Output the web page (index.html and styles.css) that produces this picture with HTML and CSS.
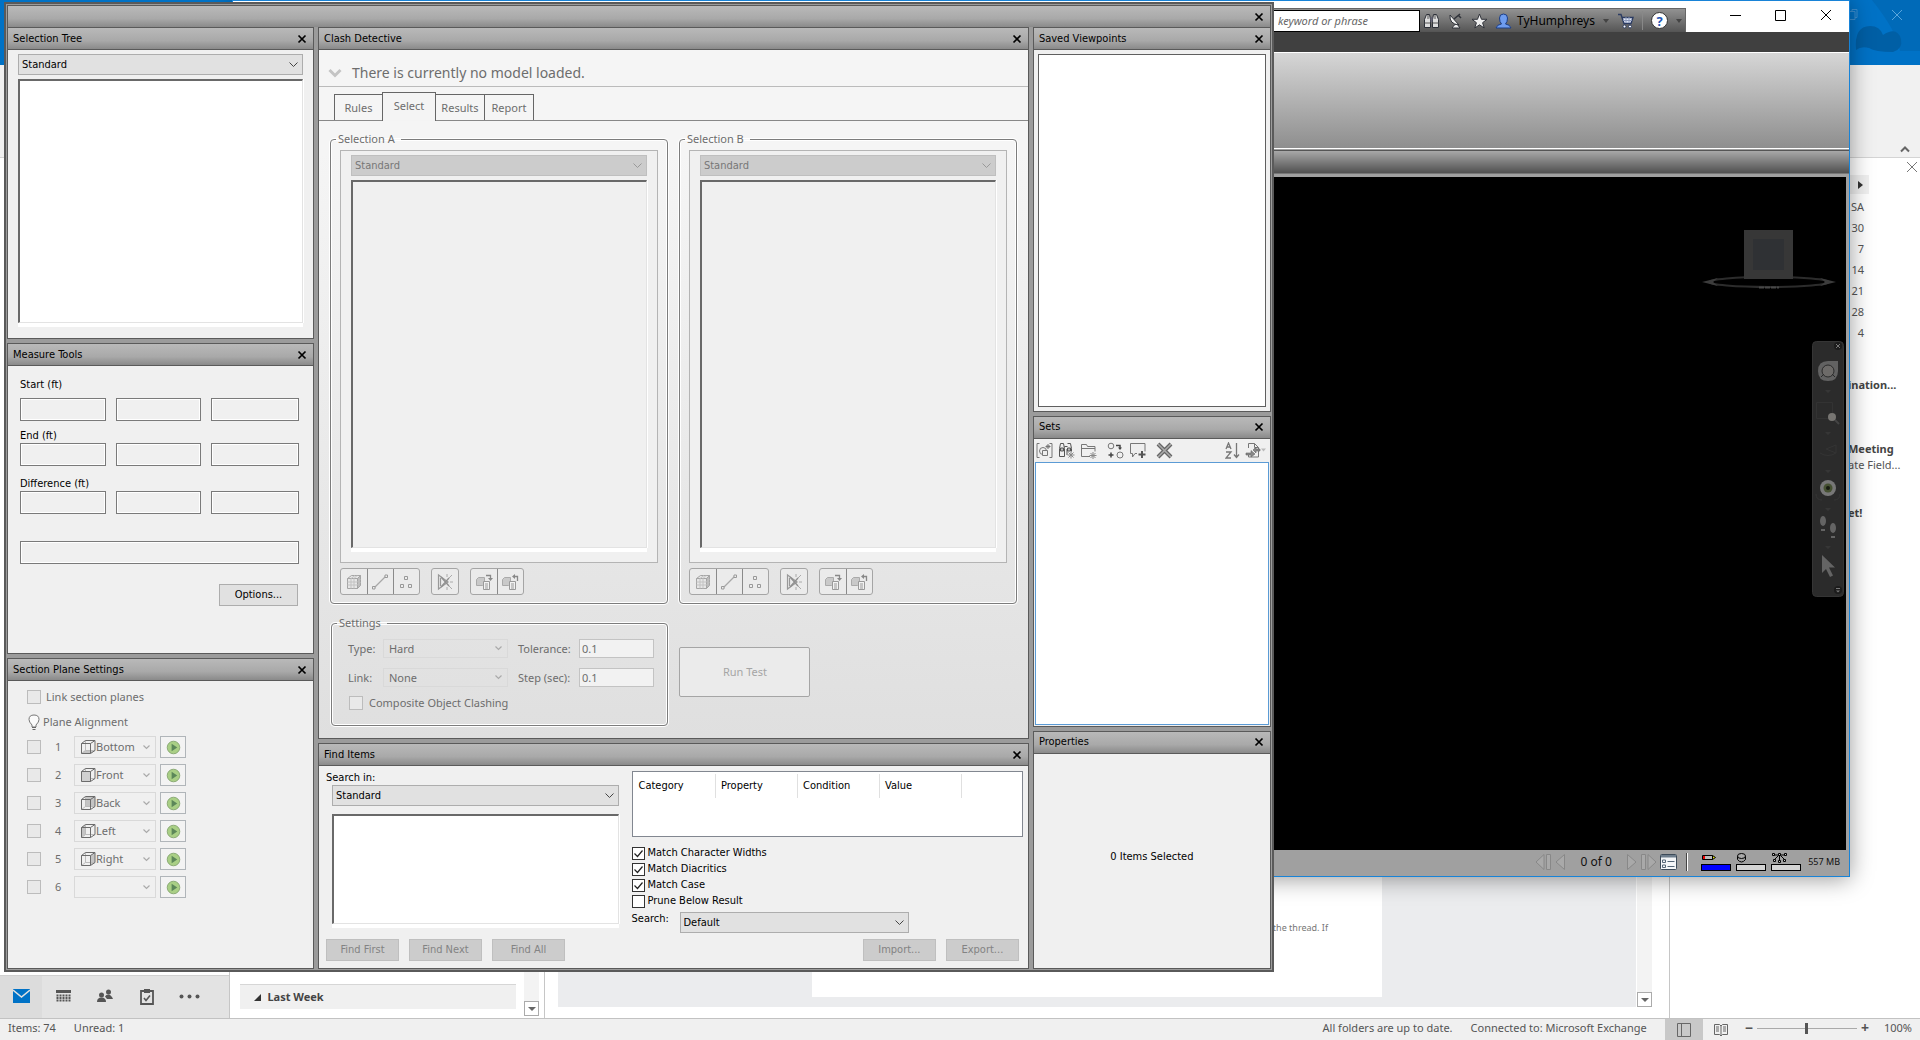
FILE: index.html
```html
<!DOCTYPE html>
<html lang="en">
<head>
  <meta charset="UTF-8" />
  <meta name="viewport" content="width=device-width, initial-scale=1.0"/>
  <title>Navisworks</title>
  <link rel="stylesheet" href="styles.css">
</head>
<body>

  <!-- shared icons -->
  <svg class="sprite" aria-hidden="true">
    <symbol id="i-x" viewBox="0 0 10 10"><path d="M1.5 1.5 8.5 8.5M8.5 1.5 1.5 8.5" stroke="currentColor" stroke-width="1.7" fill="none"/></symbol>
    <symbol id="i-thinx" viewBox="0 0 12 12"><path d="M1 1 11 11M11 1 1 11" stroke="currentColor" stroke-width="1" fill="none"/></symbol>
    <symbol id="i-cube" viewBox="0 0 18 18"><path d="M2.5 5.5h10v10h-10zM2.5 5.5l4-3h9l-3 3" fill="#e6e6e6" stroke="#a5a5a5"/><path d="M12.5 5.5l3-3v10l-3 3z" fill="#bbb" stroke="#a5a5a5"/><path d="M6 5.5v10M9 5.5v10M2.5 9h10l3-3M2.5 12h10l3-3M6 5.5l4-3M9 5.5l3-3" stroke="#c2c2c2" fill="none"/></symbol>
    <symbol id="i-line" viewBox="0 0 18 18"><path d="M3.5 14.5 14.5 3.5" stroke="#a8a8a8" stroke-width="1.3"/><path d="M1.5 13.5h2.500v2.500h-2.500zM14 2h2.500v2.500h-2.500z" fill="#eee" stroke="#999"/></symbol>
    <symbol id="i-points" viewBox="0 0 18 18"><path d="M7.5 3.5h3v3h-3zM3.5 11.5h3v3h-3zM11.5 11.5h3v3h-3z" fill="#eee" stroke="#999"/></symbol>
    <symbol id="i-clash" viewBox="0 0 18 18"><path d="M2.5 2v14L12 9zM4.5 5v8" fill="none" stroke="#999" stroke-width="1.2"/><path d="M5 4l8 9M5 14l8-9" stroke="#8f8f8f" stroke-width="1.3"/><path d="M11 4V1M13 5l3-3M14 9h3M13 13l3 3M11 14v3" stroke="#aaa"/></symbol>
    <symbol id="i-sendin" viewBox="0 0 18 18"><path d="M1.5 6.5l2-2h6v7l-2 1h-6z" fill="#c9c9c9" stroke="#aaa"/><path d="M8.5 8.5h6v8h-6z" fill="#f2f2f2" stroke="#999"/><path d="M10 11h3M10 13h3M10 15h3" stroke="#999"/><path d="M11 2.5h4.500V6" fill="none" stroke="#888" stroke-width="1.3"/><path d="M13 5h5l-2.500 3z" fill="#888"/></symbol>
    <symbol id="i-sendout" viewBox="0 0 18 18"><path d="M1.5 6.5l2-2h6v7l-2 1h-6z" fill="#c9c9c9" stroke="#aaa"/><path d="M8.5 8.5h6v8h-6z" fill="#f2f2f2" stroke="#999"/><path d="M10 11h3M10 13h3M10 15h3" stroke="#999"/><path d="M13 3.5h3.500V8" fill="none" stroke="#888" stroke-width="1.3"/><path d="M14 1v5l-3-2.500z" fill="#888"/></symbol>
    <symbol id="i-play" viewBox="0 0 16 16"><circle cx="8" cy="8" r="6.7" fill="#a9cf85" stroke="#88a872"/><path d="M6 4l6 4-6 4z" fill="#5c8759"/></symbol>
    <symbol id="i-box" viewBox="0 0 16 16"><path d="M5.5 1.5v10H15M5.5 11.5l-4 3" fill="none" stroke="#bbb"/><path d="M1.5 4.5h9v10h-9zM1.5 4.5l4-3H15l-4.500 3M15 1.5v10l-4.500 3" fill="none" stroke="#6c6c6c"/></symbol>
  </svg>

  <div class="outlook">
    <header class="ol-title">
      <svg class="ol-art" viewBox="0 0 70 65"><path d="M22 0h48v51H50q-2-18-28-51z" fill="#006ab8"/><path d="M6 50q-2-24 14-24 10 0 13 9 14-9 18 4 2 10-8 13-18 0-24-4-8-2-13 2z" fill="#005fa5"/><path d="M0 11.5h5v8H0M2 11V9.5h5v8H5" fill="none" stroke="#3c8fd0"/><path d="M42 10l10 10M52 10 42 20" stroke="#5aa5dc"/></svg>
    </header>
    <div class="ol-ribbon">
      <button class="plain" aria-label="Collapse the Ribbon"><svg width="10" height="8" viewBox="0 0 10 8"><path d="M1 6.5 5 2.5 9 6.5" fill="none" stroke="#666" stroke-width="2"/></svg></button>
    </div>
    <div class="ol-main">
      <div class="ol-folders">
        <nav class="ol-nav">
          <button class="ol-navbtn current" aria-label="Mail"><svg width="17" height="14" viewBox="0 0 17 14"><path d="M0 0h17v14H0z" fill="#0072c6"/><path d="M0 1l8.500 7L17 1" fill="none" stroke="#e1e1e1" stroke-width="1.5"/></svg></button>
          <button class="ol-navbtn" aria-label="Calendar"><svg width="15" height="14" viewBox="0 0 15 14"><path d="M0 1h15v3H0z" fill="#555"/><path d="M.5 6.5h14M.5 9h14M.5 11.5h14" stroke="#555" stroke-width="1.8" stroke-dasharray="2 1"/></svg></button>
          <button class="ol-navbtn" aria-label="People"><svg width="16" height="14" viewBox="0 0 16 14" fill="#555"><circle cx="4.5" cy="6" r="2.5"/><path d="M0 13q0-4.500 4.500-4.500T9 13z"/><circle cx="11.5" cy="3" r="2.5"/><path d="M8 7.5q1-2 3.500-2T16 10h-6z"/></svg></button>
          <button class="ol-navbtn" aria-label="Tasks"><svg width="14" height="17" viewBox="0 0 14 17"><path d="M1 3h12v13H1z" fill="none" stroke="#555" stroke-width="1.8"/><path d="M4 1h6v4H4z" fill="#555"/><path d="M4 10l2 2.500 4-5" fill="none" stroke="#555" stroke-width="1.6"/></svg></button>
          <button class="ol-navbtn" aria-label="More"><svg width="21" height="5" viewBox="0 0 21 5" fill="#555"><circle cx="2.5" cy="2.5" r="2"/><circle cx="10.5" cy="2.5" r="2"/><circle cx="18.5" cy="2.5" r="2"/></svg></button>
        </nav>
      </div>
      <div class="ol-list">
        <div class="ol-group"><svg width="7" height="7" viewBox="0 0 7 7"><path d="M7 0v7H0z" fill="#333"/></svg>Last Week</div>
        <div class="scroll"><button class="scroll-btn" aria-label="Scroll down"><svg width="8" height="4" viewBox="0 0 8 4"><path d="M0 0h8L4 4z" fill="#666"/></svg></button></div>
      </div>
      <div class="ol-reading">
        <div class="ol-page"><div class="ol-mail">the thread. If</div></div>
        <div class="scroll"><button class="scroll-btn" aria-label="Scroll down"><svg width="8" height="4" viewBox="0 0 8 4"><path d="M0 0h8L4 4z" fill="#666"/></svg></button></div>
      </div>
      <aside class="ol-todo">
        <button class="plain todo-close" aria-label="Close pane"><svg width="12" height="12"><use href="#i-thinx"/></svg></button>
        <button class="todo-next" aria-label="Next month"><svg width="5" height="8" viewBox="0 0 5 8"><path d="M0 0l5 4-5 4z" fill="#333"/></svg></button>
        <ul class="cal">
          <li>SA</li><li>30</li><li>7</li><li>14</li><li>21</li><li>28</li><li>4</li>
        </ul>
        <ul class="tasks">
          <li><b>ination...</b></li>
          <li><b>Meeting</b><br>ate Field...</li>
          <li><b>et!</b></li>
        </ul>
      </aside>
    </div>
    <footer class="ol-status">
      <span>Items: 74</span>
      <span>Unread: 1</span>
      <span class="push">All folders are up to date.</span>
      <span>Connected to: Microsoft Exchange</span>
      <button class="view on" aria-label="Normal view"><svg width="14" height="14" viewBox="0 0 14 14"><path d="M.5 .5h13v13H.5zM4.5 .5v13" fill="none" stroke="#666"/></svg></button>
      <button class="view" aria-label="Reading view"><svg width="14" height="14" viewBox="0 0 14 14"><path d="M.5 1.5h5L7 3l1.500-1.500h5v10h-5L7 13l-1.500-1.500h-5zM7 3v10" fill="none" stroke="#666"/><path d="M2 4h3M2 6h3M2 8h3M9 4h3M9 6h3M9 8h3" stroke="#666"/></svg></button>
      <label class="zoom"><b>−</b><input type="range" min="0" max="200" value="100" aria-label="Zoom"><b>+</b></label>
      <span>100%</span>
    </footer>
  </div>

  <div class="navis">
    <div class="nv-top">
      <div class="infocenter">
        <input type="text" class="nv-search" placeholder="keyword or phrase" aria-label="Search">
        <button class="plain" aria-label="Find"><svg width="17" height="16" viewBox="0 0 17 16"><path d="M3.5 1.5h3l1 5v8h-6v-8zM10.5 1.5h3l2 5v8h-6v-8z" fill="#ddd" stroke="#2d3038"/><path d="M7.5 4h2v5h-2z" fill="#667"/><path d="M1.5 10h6M9.5 10h6M5 2v4M12 2v4" stroke="#555"/></svg></button>
        <button class="plain" aria-label="Subscription"><svg width="17" height="16" viewBox="0 0 15 16"><path d="M4 15q2-4 5-4l3 4z" fill="#eee" stroke="#30333a"/><path d="M2 2q-1 9 9 10L2 2z" fill="#eee" stroke="#30333a"/><path d="M6 6l6-5M13 5l-3-3" fill="none" stroke="#30333a" stroke-width="1.5"/></svg></button>
        <button class="plain" aria-label="Favorites"><svg width="17" height="16" viewBox="0 0 17 16"><path d="M8.500 1l2 5.300h5.500l-4.400 3.400 1.600 5.300-4.700-3.200L3.800 15l1.600-5.300L1 6.300h5.500z" fill="#eee" stroke="#30333a"/></svg></button>
        <button class="plain user"><svg width="17" height="16" viewBox="0 0 17 16"><path d="M1 15q1-3.500 5.500-4Q4.500 9 4.500 5q0-4 4-4t4 4q0 4-2 6 4.500.5 5.500 4z" fill="#6f9df0" stroke="#1d3e86"/></svg>TyHumphreys</button>
        <i class="caret"></i>
        <button class="plain" aria-label="Exchange Apps"><svg width="17" height="16" viewBox="0 0 17 16"><path d="M5 4.500h11l-2 6H7z" fill="#dde4f5"/><path d="M1 1.500h3l3 9h7l2-6H5.500" fill="none" stroke="#2c3c63" stroke-width="1.4"/><path d="M6 7.500h9M9 4v6M12 4v6" stroke="#8a97b8"/><circle cx="7.5" cy="13.500" r="1.500" fill="#fff" stroke="#2c3c63"/><circle cx="13" cy="13.500" r="1.500" fill="#fff" stroke="#2c3c63"/></svg></button>
        <i class="sep"></i>
        <button class="help" aria-label="Help">?</button>
        <i class="caret"></i>
      </div>
      <div class="win-btns">
        <button class="plain" aria-label="Minimize"><svg width="11" height="11" viewBox="0 0 11 11"><path d="M0 5.500h11" stroke="#000"/></svg></button>
        <button class="plain" aria-label="Maximize"><svg width="11" height="11" viewBox="0 0 11 11"><path d="M.5 .5h10v10H.5z" fill="none" stroke="#000"/></svg></button>
        <button class="plain" aria-label="Close"><svg width="12" height="12"><use href="#i-thinx"/></svg></button>
      </div>
    </div>
    <div class="nv-tabs"></div>
    <div class="nv-ribbon"></div>
    <div class="nv-bar"></div>
    <div class="nv-canvas">
      <svg class="viewcube" width="134" height="60" viewBox="0 0 134 60">
        <ellipse cx="67" cy="52" rx="60" ry="5" fill="none" stroke="#2c2c2c" stroke-width="2"/>
        <path d="M0 52l16-4-5 4 5 4zM134 52l-16-4 5 4-5 4z" fill="#3c3c3c"/>
        <path d="M57 57.500h20" stroke="#484848" stroke-width="2" stroke-dasharray="5 1"/>
        <path d="M42 0h49v49H42z" fill="#373737"/>
        <path d="M51 9h31v31H51z" fill="#2f3134"/>
      </svg>
      <svg class="navbar" width="32" height="256" viewBox="0 0 32 256">
        <rect x=".5" y=".5" width="31" height="255" rx="4" fill="#2b2b2b" stroke="#353535"/>
        <circle cx="26" cy="5" r="4" fill="#1c1c1c"/><path d="M24 3l4 4M28 3l-4 4" stroke="#777"/>
        <path d="M6 30q0-10 10-10h10v10q0 10-10 10T6 30z" fill="#626262"/><circle cx="16" cy="30" r="6" fill="#6d6b69" stroke="#2b2b2b"/><path d="M9 36l3-3M23 36l-3-3" stroke="#2b2b2b"/>
        <path d="M4.500 61.500h16v16h-16z" fill="none" stroke="#333"/><path d="M23 79l4 4" stroke="#444" stroke-width="2"/><circle cx="20" cy="76" r="4" fill="#777572"/>
        <path d="M8 112q8 5 16 0M14 108l10-4v8z" fill="none" stroke="#343434"/>
        <circle cx="16" cy="147" r="8" fill="#777"/><circle cx="16" cy="147" r="4.500" fill="#465132"/><circle cx="16" cy="147" r="2" fill="#161a10"/><path d="M4 153q0 6 6 6M28 153q0 6-6 6" fill="none" stroke="#363636"/>
        <ellipse cx="11" cy="180" rx="3" ry="5" fill="#646464"/><ellipse cx="21" cy="187" rx="3" ry="5" fill="#646464"/><path d="M9 188h4v2H9zM19 195h4v2h-4z" fill="#646464"/>
        <path d="M10 214v18l4-4 4 8 3-1.500-4-8h6z" fill="#646464"/>
        <path d="M13 49h6l-3 3zM13 91h6l-3 3zM13 129h6l-3 3zM13 167h6l-3 3zM13 205h6l-3 3z" fill="#363636"/>
        <circle cx="26" cy="249" r="4" fill="#1c1c1c"/><path d="M24 247h4v1h-4zM24 249.500h4l-2 2z" fill="#777"/>
      </svg>
    </div>
    <div class="nv-status">
      <button class="plain" aria-label="First sheet"><svg width="17" height="18" viewBox="0 0 17 18"><path d="M9 1.500v15L1 9zM11.500 1.500h4v15h-4z" fill="#a9a9a9" stroke="#888"/></svg></button>
      <button class="plain" aria-label="Previous sheet"><svg width="11" height="18" viewBox="0 0 11 18"><path d="M9.500 1.500v15L1 9z" fill="#a9a9a9" stroke="#888"/></svg></button>
      <span class="sheet-no">0 of 0</span>
      <button class="plain" aria-label="Next sheet"><svg width="11" height="18" viewBox="0 0 11 18"><path d="M1.500 1.500v15L10 9z" fill="#a9a9a9" stroke="#888"/></svg></button>
      <button class="plain" aria-label="Last sheet"><svg width="17" height="18" viewBox="0 0 17 18"><path d="M8 1.500v15L16 9zM1.500 1.500h4v15h-4z" fill="#a9a9a9" stroke="#888"/></svg></button>
      <button class="plain" aria-label="Sheet browser"><svg width="17" height="16" viewBox="0 0 17 16"><rect x=".5" y=".5" width="16" height="15" rx="1" fill="#f4f6f8" stroke="#3c4a58"/><path d="M1 1h15v2.500H1z" fill="#6d7d8c"/><path d="M2.500 6h3v2.500h-3zM2.500 11h3v2.500h-3z" fill="none" stroke="#567"/><path d="M7.500 7.500h7M7.500 12.500h7" stroke="#567"/></svg></button>
      <i class="divider"></i>
      <div class="meter busy"><svg width="17" height="9" viewBox="0 0 17 9"><path d="M1.500 2.500h10v4h-10z" fill="#bbb" stroke="#000"/><path d="M2 3h2v3H2z" fill="#e00"/><path d="M11.500 2.500l3 2-3 2z" fill="#ee0" stroke="#000"/></svg><i></i></div>
      <div class="meter"><svg width="12" height="10" viewBox="0 0 12 10"><path d="M1.500 3v3.500q4 5 8 0V3" fill="#a0a0a0" stroke="#000"/><ellipse cx="5.500" cy="3" rx="4" ry="2.500" fill="#aaa" stroke="#000"/></svg><i></i></div>
      <div class="meter"><svg width="17" height="10" viewBox="0 0 17 10"><path d="M2 2h13M8 2 3 7M8.500 2v6M9 2l5 5" stroke="#000"/><path d="M1.500 .5h2v2h-2zM7.500 .5h2v2h-2zM13.500 .5h2v2h-2zM2.500 6.500h2v2h-2zM7.500 7.500h2v2h-2zM12.500 6.500h2v2h-2z" fill="#ccc" stroke="#000"/></svg><i></i></div>
      <span class="mem">557 MB</span>
    </div>
  </div>

  <div class="dock">
    <div class="bar dock-title"><button class="close" aria-label="Close"><svg><use href="#i-x"/></svg></button></div>
    <div class="dock-cols">

      <div class="col col-left">
        <section class="panel tree">
          <h2 class="bar">Selection Tree<button class="close" aria-label="Close"><svg><use href="#i-x"/></svg></button></h2>
          <div class="panel-body tree-body">
            <select class="combo" aria-label="Tree mode"><option>Standard</option></select>
            <div class="listbox"></div>
          </div>
        </section>

        <section class="panel measure">
          <h2 class="bar">Measure Tools<button class="close" aria-label="Close"><svg><use href="#i-x"/></svg></button></h2>
          <div class="panel-body measure-body">
            <div class="xyz start"><label for="sx">Start (ft)</label><input id="sx" readonly><input aria-label="Start Y" readonly><input aria-label="Start Z" readonly></div>
            <div class="xyz"><label for="ex">End (ft)</label><input id="ex" readonly><input aria-label="End Y" readonly><input aria-label="End Z" readonly></div>
            <div class="xyz"><label for="dx">Difference (ft)</label><input id="dx" readonly><input aria-label="Difference Y" readonly><input aria-label="Difference Z" readonly></div>
            <input class="total" aria-label="Distance" readonly>
            <button class="btn options">Options...</button>
          </div>
        </section>

        <section class="panel planes">
          <h2 class="bar">Section Plane Settings<button class="close" aria-label="Close"><svg><use href="#i-x"/></svg></button></h2>
          <div class="panel-body planes-body segoe">
            <label class="link-row"><input type="checkbox" class="tick" disabled>Link section planes</label>
            <div class="align-row"><svg width="12" height="17" viewBox="0 0 12 17"><path d="M4 11Q1 8 1 5.500 1 1 6 1t5 4.500Q11 8 8 11v2H4z" fill="#fafafa" stroke="#777"/><path d="M4 13.500h4M4.500 15.500h3" stroke="#666"/></svg>Plane Alignment</div>
            <div class="plane"><input type="checkbox" class="tick" disabled aria-label="Plane 1"><span>1</span><div class="plane-pick"><svg width="16" height="16" viewBox="0 0 16 16"><path d="M1 14.500l4-3h10l-4 3z" fill="#c4c4c4"/><use href="#i-box"/></svg><select class="soft" disabled aria-label="Alignment 1"><option>Bottom</option></select></div><button class="go" aria-label="Enable plane 1"><svg><use href="#i-play"/></svg></button></div>
            <div class="plane"><input type="checkbox" class="tick" disabled aria-label="Plane 2"><span>2</span><div class="plane-pick"><svg width="16" height="16" viewBox="0 0 16 16"><use href="#i-box"/><path d="M2 5h8v9H2z" fill="#d0d0d0"/></svg><select class="soft" disabled aria-label="Alignment 2"><option>Front</option></select></div><button class="go" aria-label="Enable plane 2"><svg><use href="#i-play"/></svg></button></div>
            <div class="plane"><input type="checkbox" class="tick" disabled aria-label="Plane 3"><span>3</span><div class="plane-pick"><svg width="16" height="16" viewBox="0 0 16 16"><path d="M5 1.500h10v10H5z" fill="#c4c4c4"/><use href="#i-box"/></svg><select class="soft" disabled aria-label="Alignment 3"><option>Back</option></select></div><button class="go" aria-label="Enable plane 3"><svg><use href="#i-play"/></svg></button></div>
            <div class="plane"><input type="checkbox" class="tick" disabled aria-label="Plane 4"><span>4</span><div class="plane-pick"><svg width="16" height="16" viewBox="0 0 16 16"><path d="M1 4.500l4.500-3v10l-4.500 3z" fill="#c4c4c4"/><use href="#i-box"/></svg><select class="soft" disabled aria-label="Alignment 4"><option>Left</option></select></div><button class="go" aria-label="Enable plane 4"><svg><use href="#i-play"/></svg></button></div>
            <div class="plane"><input type="checkbox" class="tick" disabled aria-label="Plane 5"><span>5</span><div class="plane-pick"><svg width="16" height="16" viewBox="0 0 16 16"><path d="M10.500 4.500l4.500-3v10l-4.500 3z" fill="#c4c4c4"/><use href="#i-box"/></svg><select class="soft" disabled aria-label="Alignment 5"><option>Right</option></select></div><button class="go" aria-label="Enable plane 5"><svg><use href="#i-play"/></svg></button></div>
            <div class="plane"><input type="checkbox" class="tick" disabled aria-label="Plane 6"><span>6</span><div class="plane-pick"><select class="soft" disabled aria-label="Alignment 6"><option></option></select></div><button class="go" aria-label="Enable plane 6"><svg><use href="#i-play"/></svg></button></div>
          </div>
        </section>
      </div>

      <div class="col col-mid">
        <section class="panel clash">
          <h2 class="bar">Clash Detective<button class="close" aria-label="Close"><svg><use href="#i-x"/></svg></button></h2>
          <div class="panel-body clash-body segoe">
            <div class="notice"><svg width="14" height="10" viewBox="0 0 14 10"><path d="M1.500 2 7 7.500 12.500 2" fill="none" stroke="#c4c4c4" stroke-width="3"/></svg>There is currently no model loaded.</div>
            <div class="tabs">
              <button class="tab">Rules</button><button class="tab selected">Select</button><button class="tab">Results</button><button class="tab">Report</button>
            </div>
            <div class="sides">
              <fieldset class="group">
                <legend>Selection A</legend>
                <div class="side-box">
                  <select class="combo" disabled aria-label="Selection A mode"><option>Standard</option></select>
                  <div class="listbox"></div>
                </div>
                <div class="tools">
                  <div class="toolset"><button aria-label="Surfaces"><svg><use href="#i-cube"/></svg></button><button aria-label="Lines"><svg><use href="#i-line"/></svg></button><button aria-label="Points"><svg><use href="#i-points"/></svg></button></div>
                  <div class="toolset"><button aria-label="Self intersect"><svg><use href="#i-clash"/></svg></button></div>
                  <div class="toolset"><button aria-label="Use current selection"><svg><use href="#i-sendin"/></svg></button><button aria-label="Select in scene"><svg><use href="#i-sendout"/></svg></button></div>
                </div>
              </fieldset>
              <fieldset class="group">
                <legend>Selection B</legend>
                <div class="side-box">
                  <select class="combo" disabled aria-label="Selection B mode"><option>Standard</option></select>
                  <div class="listbox"></div>
                </div>
                <div class="tools">
                  <div class="toolset"><button aria-label="Surfaces"><svg><use href="#i-cube"/></svg></button><button aria-label="Lines"><svg><use href="#i-line"/></svg></button><button aria-label="Points"><svg><use href="#i-points"/></svg></button></div>
                  <div class="toolset"><button aria-label="Self intersect"><svg><use href="#i-clash"/></svg></button></div>
                  <div class="toolset"><button aria-label="Use current selection"><svg><use href="#i-sendin"/></svg></button><button aria-label="Select in scene"><svg><use href="#i-sendout"/></svg></button></div>
                </div>
              </fieldset>
            </div>
            <div class="run-row">
              <fieldset class="group settings">
                <legend>Settings</legend>
                <div class="set-grid">
                  <label for="type">Type:</label><select class="soft" id="type" disabled><option>Hard</option></select>
                  <label for="tol">Tolerance:</label><input id="tol" value="0.1" disabled>
                  <label for="link">Link:</label><select class="soft" id="link" disabled><option>None</option></select>
                  <label for="step">Step (sec):</label><input id="step" value="0.1" disabled>
                </div>
                <label class="composite"><input type="checkbox" class="tick" disabled>Composite Object Clashing</label>
              </fieldset>
              <div class="run-cell"><button class="run" disabled>Run Test</button></div>
            </div>
          </div>
        </section>

        <section class="panel find">
          <h2 class="bar">Find Items<button class="close" aria-label="Close"><svg><use href="#i-x"/></svg></button></h2>
          <div class="panel-body find-body">
            <div class="find-left">
              <label for="searchin">Search in:</label>
              <select class="combo" id="searchin"><option>Standard</option></select>
              <div class="listbox"></div>
              <div class="btns"><button class="btn" disabled>Find First</button><button class="btn" disabled>Find Next</button><button class="btn" disabled>Find All</button></div>
            </div>
            <div class="find-right">
              <div class="conditions">
                <table>
                  <tr><th>Category</th><th>Property</th><th>Condition</th><th>Value</th></tr>
                </table>
              </div>
              <div class="checks">
                <label><input type="checkbox" class="check" checked>Match Character Widths</label>
                <label><input type="checkbox" class="check" checked>Match Diacritics</label>
                <label><input type="checkbox" class="check" checked>Match Case</label>
                <label><input type="checkbox" class="check">Prune Below Result</label>
              </div>
              <div class="search-row"><label for="searchmode">Search:</label><select class="combo" id="searchmode"><option>Default</option></select></div>
              <div class="btns end"><button class="btn" disabled>Import...</button><button class="btn" disabled>Export...</button></div>
            </div>
          </div>
        </section>
      </div>

      <div class="col col-right">
        <section class="panel views">
          <h2 class="bar">Saved Viewpoints<button class="close" aria-label="Close"><svg><use href="#i-x"/></svg></button></h2>
          <div class="panel-body views-body"><div class="views-list"></div></div>
        </section>

        <section class="panel sets">
          <h2 class="bar">Sets<button class="close" aria-label="Close"><svg><use href="#i-x"/></svg></button></h2>
          <div class="panel-body sets-body">
            <div class="sets-tools">
              <button class="plain" aria-label="Save Selection"><svg width="17" height="17" viewBox="0 0 17 17" fill="none" stroke="#777"><path d="M3.500 1.500h-2.500v14h2.500M13.500 1.500h2.500v14h-2.500"/><circle cx="7" cy="9" r="3.500"/><path d="M6.500 8.500h5v5h-5z" fill="#eee"/><path d="M12 2v5M9.500 4.500h5M10.500 3l3 3M13.500 3l-3 3"/></svg></button>
              <button class="plain" aria-label="Save Search"><svg width="17" height="17" viewBox="0 0 17 17" fill="none" stroke="#555"><path d="M2.500 1.500h3l1 5v8h-5v-8zM9.500 1.500h3l1 5v3M9 7v6M6.500 4.500h3"/><path d="M2.500 6h3v3h-3zM9.500 6h3v3h-3z" fill="#bbb"/><path d="M13 9.500v7M9.500 13h7M10.500 10.500l5 5M15.500 10.500l-5 5" stroke="#888"/></svg></button>
              <button class="plain" aria-label="New Folder"><svg width="17" height="17" viewBox="0 0 17 17" fill="none" stroke="#777"><path d="M10 14.500H1.500v-12h5l1 2h7.500v5M1.500 6.500h13.500"/><path d="M13 10v7M9.500 13.500h7M10.500 11l5 5M15.500 11l-5 5" stroke="#888"/></svg></button>
              <button class="plain gap" aria-label="Duplicate"><svg width="17" height="17" viewBox="0 0 17 17" fill="none" stroke="#777"><circle cx="4" cy="4" r="2.800"/><circle cx="13" cy="13" r="3"/><path d="M9 3.500h4v3M4 10.500v5M1.500 13h5" stroke="#444" stroke-width="1.500"/><path d="M11 5.500h4l-2 2.500z" fill="#444" stroke="none"/></svg></button>
              <button class="plain" aria-label="Add Comment"><svg width="17" height="17" viewBox="0 0 17 17" fill="none" stroke="#777"><path d="M8 11.500H6l-2.500 3.500v-3.500h-2v-10h14.500v8" fill="#eee"/><path d="M13 9v7M9.500 12.500h7" stroke="#555" stroke-width="2"/></svg></button>
              <button class="plain gap" aria-label="Delete"><svg width="17" height="17" viewBox="0 0 17 17"><path d="M2 2l13 13M15 2 2 15" stroke="#666" stroke-width="4"/><path d="M2 2l13 13M15 2 2 15" stroke="#aaa" stroke-width="1.500"/></svg></button>
              <button class="plain push" aria-label="Sort"><svg width="15" height="17" viewBox="0 0 15 17" fill="none" stroke="#777" stroke-width="1.300"><path d="M1 7l2.500-6L6 7M2 5h3M1 10h5l-5 6h5M11.500 1v13M9 12.500l2.500 3 2.500-3"/></svg></button>
              <button class="plain" aria-label="Import/Export"><svg width="21" height="17" viewBox="0 0 21 17" fill="none" stroke="#777"><path d="M3.500 6v-4.500h6l4 4v9.500h-10v-3M9.500 1.500v4h4"/><path d="M1 11h5V8.500l4 3.500-4 3V13H1zM15 7h-4V5L8 8l3 3V9h4z" fill="#888" stroke="#666" stroke-width=".6"/><path d="M16 6.500h5l-2.500 3z" fill="#bbb" stroke="none"/></svg></button>
            </div>
            <div class="sets-list"></div>
          </div>
        </section>

        <section class="panel props">
          <h2 class="bar">Properties<button class="close" aria-label="Close"><svg><use href="#i-x"/></svg></button></h2>
          <div class="panel-body props-body">0 Items Selected</div>
        </section>
      </div>

    </div>
  </div>

</body>
</html>
```
FILE: styles.css
```css
* {
  box-sizing: border-box;
}

body {
  margin: 0;
  height: 100vh;
  overflow: hidden;
  position: relative;
  font-family: "DejaVu Sans Condensed", "Noto Sans", sans-serif;
  font-size: 11px;
  line-height: 14px;
  color: #000;
}

button, input, select {
  font: inherit;
  color: inherit;
  margin: 0;
  padding: 0;
  border-radius: 0;
}

ul {
  list-style: none;
  margin: 0;
  padding: 0;
}

svg {
  display: block;
  flex: none;
}

.sprite {
  position: absolute;
  width: 0;
  height: 0;
}

.plain {
  display: flex;
  align-items: center;
  background: none;
  border: none;
}

.push {
  margin-left: auto;
}

.segoe, .outlook, .navis {
  font-family: "Noto Sans", sans-serif;
}

/* Outlook window behind everything */
.outlook {
  height: 100vh;
  display: flex;
  flex-direction: column;
  background: #fff;
  color: #555;
}

.ol-title {
  height: 65px;
  flex: none;
  background: #0072c6;
  display: flex;
  justify-content: flex-end;
}

.ol-art {
  width: 70px;
  height: 65px;
}

.ol-ribbon {
  height: 93px;
  flex: none;
  background: #f1f1f1;
  border-bottom: 1px solid #d4d4d4;
  display: flex;
  justify-content: flex-end;
  align-items: flex-end;
  padding: 0 10px 4px;
}

.ol-main {
  flex: 1;
  min-height: 0;
  display: flex;
}

.ol-folders {
  width: 12%;
  border-right: 1px solid #c6c6c6;
  display: flex;
  flex-direction: column;
  justify-content: flex-end;
}

.ol-nav {
  display: flex;
  height: 43px;
  background: #e3e3e3;
  border-top: 1px solid #d0d0d0;
}

.ol-navbtn {
  width: 42px;
  display: flex;
  align-items: center;
  justify-content: center;
  padding-bottom: 2px;
  background: none;
  border: none;
}

.ol-navbtn.current {
  background: #dcdcdc;
}

.ol-list {
  width: 315px;
  border-right: 1px solid #c6c6c6;
  display: flex;
  align-items: flex-end;
  padding: 0 5px 2px 10px;
  gap: 8px;
}

.ol-group {
  flex: 1;
  height: 25px;
  margin-bottom: 7px;
  padding-left: 14px;
  background: #f0f0f0;
  border-top: 1px solid #d6d6d6;
  display: flex;
  align-items: center;
  gap: 6px;
  font-weight: bold;
  color: #444;
}

.scroll {
  width: 15px;
  align-self: stretch;
  background: #f3f3f3;
  display: flex;
  align-items: flex-end;
}

.scroll-btn {
  width: 15px;
  height: 15px;
  background: #fff;
  border: 1px solid #ababab;
  display: flex;
  align-items: center;
  justify-content: center;
}

.ol-reading {
  flex: 1;
  display: flex;
  gap: 1px;
  padding: 0 17px 11px 13px;
  border-right: 1px solid #c6c6c6;
}

.ol-page {
  flex: 1;
  background: #ebecee;
  display: flex;
  justify-content: flex-end;
  padding: 0 254px 10px 0;
}

.ol-mail {
  width: 570px;
  background: #fff;
  display: flex;
  align-items: flex-end;
  justify-content: flex-end;
  padding: 0 54px 62px 0;
  font-size: 9px;
  color: #777;
}

.ol-todo {
  width: 250px;
  padding: 3px 2px 0 178px;
}

.todo-close {
  margin-left: auto;
  color: #777;
}

.todo-next {
  display: flex;
  align-items: center;
  justify-content: flex-end;
  width: 21px;
  height: 19px;
  margin-top: 2px;
  padding-right: 6px;
  border: none;
  background: #f0f0f0;
}

.cal {
  width: 16px;
  margin-top: 2px;
  line-height: 21px;
  text-align: right;
}

.tasks {
  margin-top: 34px;
  white-space: nowrap;
}

.tasks li {
  min-height: 64px;
  line-height: 16px;
}

.tasks b {
  color: #444;
}

.ol-status {
  height: 22px;
  flex: none;
  display: flex;
  align-items: center;
  gap: 18px;
  padding: 0 8px 3px;
  background: #f0f0f0;
  border-top: 1px solid #c2c2c2;
}

.view {
  width: 38px;
  align-self: stretch;
  border: none;
  background: none;
  display: flex;
  align-items: center;
  justify-content: center;
  margin: 0 -18px -3px 0;
}

.view.on {
  background: #c8c8c8;
}

.zoom {
  display: flex;
  align-items: center;
  gap: 5px;
  margin: 0 -3px 0 22px;
  font-size: 14px;
}

/* the slider sits right next to the view buttons */
.view + .zoom {
  margin-left: 18px;
  padding-left: 4px;
  gap: 4px;
}

.view + .view {
  width: 36px;
  margin-right: -34px;
}

.zoom input {
  appearance: none;
  width: 100px;
  height: 12px;
  background: linear-gradient(#aaa, #aaa) center / 100% 1px no-repeat;
}

.zoom input::-webkit-slider-thumb {
  appearance: none;
  width: 3px;
  height: 11px;
  background: #555;
}

/* Navisworks main window */
.navis {
  position: absolute;
  left: 12.1%;
  right: 70px;
  top: 0;
  height: 84.3vh;
  display: flex;
  flex-direction: column;
  border: 1px solid #1883d7;
  background: #a0a0a0;
  box-shadow: 0 2px 22px rgba(0,0,0,0.4);
}

.nv-top {
  height: 31px;
  flex: none;
  display: flex;
  justify-content: flex-end;
  align-items: flex-end;
  background: #fff;
}

.infocenter {
  width: 500px;
  height: 24px;
  display: flex;
  align-items: center;
  gap: 7px;
  padding-right: 2px;
  border: 1px solid #666;
  border-bottom: none;
  background: linear-gradient(#929292, #555);
}

.nv-search {
  flex: 1;
  min-width: 0;
  height: 22px;
  padding-left: 90px;
  border: 1px solid #000;
  background: #fff;
  margin-right: -4px;
}

.nv-search::placeholder {
  font-style: italic;
  color: #666;
}

.user {
  gap: 5px;
  font-size: 12px;
}

.caret {
  border: 3px solid transparent;
  border-top: 4px solid #444;
  border-bottom: none;
  margin: 0 1px;
}

.sep {
  width: 1px;
  height: 19px;
  background: #888;
  margin: 0 1px;
}

.help {
  width: 17px;
  height: 17px;
  border: 1px solid #333;
  border-radius: 50%;
  background: #fff;
  color: #2255b5;
  font-weight: bold;
  line-height: 14px;
  font-size: 13px;
}

.win-btns {
  display: flex;
  align-items: center;
  align-self: stretch;
  gap: 34px;
  padding: 0 17px 3px 44px;
  color: #000;
}

.nv-tabs {
  height: 20px;
  flex: none;
  background: #404040;
}

.nv-ribbon {
  height: 97px;
  flex: none;
  border-top: 1px solid #fff;
  border-bottom: 1px solid #fff;
  background: linear-gradient(#d6d6d6, #8e8e8e);
}

.nv-bar {
  height: 24px;
  flex: none;
  margin-top: 1px;
  border-top: 1px solid #555;
  border-bottom: 1px solid #777;
  background: linear-gradient(#a8a8a8, #505050);
}

.nv-canvas {
  flex: 1;
  min-height: 0;
  margin: 3px 3px 0 0;
  background: #000;
  position: relative;
}

.viewcube {
  position: absolute;
  top: 53px;
  right: 10px;
}

.navbar {
  position: absolute;
  top: 164px;
  right: 2px;
}

.nv-status {
  height: 26px;
  flex: none;
  display: flex;
  align-items: center;
  justify-content: flex-end;
  gap: 3px;
  padding: 0 9px 2px 0;
}

.sheet-no {
  font-size: 12px;
  width: 54px;
  text-align: center;
  color: #111;
}

.divider {
  width: 2px;
  height: 18px;
  margin: 0 8px 0 6px;
  background: #fff;
  border-left: 1px solid #444;
}

.meter {
  width: 30px;
  height: 18px;
  margin-left: 2px;
  display: flex;
  flex-direction: column;
  justify-content: space-between;
}

.meter i {
  height: 7px;
  border: 1px solid #000;
  background: #d4d4d4;
}

.meter.busy i {
  background: #0000ff;
}

.mem {
  font-size: 9px;
  color: #111;
  margin-left: 4px;
}

/* floating dock with all the tool panels */
.dock {
  position: absolute;
  left: 4px;
  top: 2px;
  width: calc(66.4% - 5px);
  height: calc(93.5vh - 2px);
  display: flex;
  flex-direction: column;
  border: 2px solid #5a5a5a;
  padding: 1px;
  background: #9b9b9b;
}

.bar {
  height: 22px;
  flex: none;
  margin: 0;
  padding: 0 6px 0 5px;
  display: flex;
  align-items: center;
  justify-content: space-between;
  font-size: 11px;
  font-weight: normal;
  background: linear-gradient(#b9b9b9, #a9a9a9 60%, #8a8a8a);
  border-bottom: 1px solid #5a5a5a;
}

.dock-title {
  justify-content: flex-end;
  border: 1px solid #5a5a5a;
  border-bottom: none;
}

.close {
  width: 10px;
  height: 10px;
  background: none;
  border: none;
}

.close svg {
  width: 10px;
  height: 10px;
}

.dock-cols {
  flex: 1;
  min-height: 0;
  display: flex;
  gap: 4px;
}

.col {
  min-width: 0;
  display: flex;
  flex-direction: column;
  gap: 4px;
}

.col-left { flex: 307 1 0; }
.col-mid { flex: 711 1 0; }
.col-right { flex: 238 1 0; }

.panel {
  min-height: 0;
  display: flex;
  flex-direction: column;
  overflow: hidden;
  border: 1px solid #5a5a5a;
  background: #f0f0f0;
}

.tree { flex: 312 1 0; }
.measure { flex: 311 1 0; }
.planes { flex: 311 1 0; }
.clash { flex: 713 1 0; }
.find { flex: 225 1 0; }
.views { flex: 385 1 0; }
.sets { flex: 311 1 0; }
.props { flex: 238 1 0; }

.panel-body {
  flex: 1;
  min-height: 0;
  display: flex;
  flex-direction: column;
}

.combo {
  appearance: none;
  width: 100%;
  height: 21px;
  flex: none;
  padding: 0 20px 0 3px;
  border: 1px solid #adadad;
  background: #e1e1e1 url("data:image/svg+xml,%3Csvg xmlns='http://www.w3.org/2000/svg' width='9' height='6'%3E%3Cpath d='M.5 .5l4 4 4-4' fill='none' stroke='%23444'/%3E%3C/svg%3E") right 4px center no-repeat;
}

.combo:disabled {
  opacity: 1;
  color: #777;
  border-color: #bfbfbf;
  background: #cccccc url("data:image/svg+xml,%3Csvg xmlns='http://www.w3.org/2000/svg' width='9' height='6'%3E%3Cpath d='M.5 .5l4 4 4-4' fill='none' stroke='%23999'/%3E%3C/svg%3E") right 4px center no-repeat;
  font-family: "DejaVu Sans Condensed", sans-serif;
}

.soft {
  appearance: none;
  opacity: 1;
  color: #6d6d6d;
  border: 1px solid #d9d9d9;
  background: url("data:image/svg+xml,%3Csvg xmlns='http://www.w3.org/2000/svg' width='7' height='5'%3E%3Cpath d='M.5 .5l3 3 3-3' fill='none' stroke='%23aaa' stroke-width='1.2'/%3E%3C/svg%3E") right 5px center no-repeat;
}

.listbox {
  flex: 1;
  min-height: 0;
  background: #fff;
  border: 1px solid #e3e3e3;
  border-top: 2px solid #696969;
  border-left: 2px solid #696969;
  box-shadow: 0 4px 0 #fff, 1px 0 0 #fff;
}

.tick {
  appearance: none;
  width: 14px;
  height: 14px;
  flex: none;
  border: 1px solid #bcbcbc;
  background: #e9e9e9;
}

.btn {
  height: 22px;
  width: 79px;
  border: 1px solid #adadad;
  background: #e1e1e1;
}

.btn:disabled {
  width: 73px;
  color: #838383;
  border-color: #bfbfbf;
  background: #cccccc;
}

/* left column */
.tree-body {
  padding: 4px 10px 15px;
  gap: 4px;
}

.measure-body {
  padding: 12px 14px 0 12px;
}

.xyz {
  display: grid;
  grid-template-columns: 86fr 86fr 88fr;
  column-gap: 10px;
  margin-bottom: 8px;
}

.xyz label {
  grid-column: 1 / -1;
}

.xyz.start label {
  margin-bottom: 6px;
}

.xyz input, .total {
  width: 100%;
  height: 23px;
  border: 1px solid #7a7a7a;
  background: #f0f0f0;
  box-shadow: inset 0 0 0 1px #fff;
}

.xyz + .xyz {
  margin-bottom: 11px;
}

.total {
  margin-top: 16px;
}

.options {
  margin: 20px 1px 0 auto;
}

.segoe {
  color: #6d6d6d;
}

.planes-body {
  padding: 7px 19px 0;
}

.link-row, .align-row, .plane {
  display: flex;
  align-items: center;
}

.link-row {
  gap: 5px;
  height: 18px;
}

.align-row {
  gap: 3px;
  height: 28px;
  padding: 4px 1px 0;
}

.plane {
  height: 28px;
  padding-bottom: 2px;
}

.plane span {
  width: 33px;
  padding-left: 14px;
}

.plane-pick {
  display: flex;
  align-items: center;
  width: 82px;
  height: 22px;
  margin-right: 4px;
  position: relative;
}

.plane-pick svg {
  position: absolute;
  left: 6px;
}

.plane-pick .soft {
  width: 100%;
  height: 22px;
  padding-left: 21px;
}

.go {
  width: 26px;
  height: 22px;
  display: flex;
  align-items: center;
  justify-content: center;
  border: 1px solid #b0b5b9;
  background: #f3f3f3;
}

.go svg {
  width: 15px;
  height: 15px;
}

/* clash detective */
.clash-body {
  background: linear-gradient(#f5f5f5 15%, #dfdfdf);
}

.notice {
  height: 37px;
  flex: none;
  display: flex;
  align-items: center;
  gap: 10px;
  padding: 9px 9px 0;
  border-bottom: 1px solid #bbb;
  font-size: 14px;
}

.tabs {
  height: 34px;
  flex: none;
  display: flex;
  align-items: flex-end;
  padding-left: 15px;
  border-bottom: 1px solid #888;
}

.tab {
  width: 49px;
  height: 26px;
  border: 1px solid #666;
  border-bottom: none;
  background: none;
}

.tab + .tab {
  border-left: none;
}

.tab + .tab.selected {
  width: 54px;
  height: 29px;
  margin-bottom: -1px;
  background: #f4f4f4;
  padding-bottom: 3px;
  border-left: 1px solid #666;
  margin-left: -1px;
}

.sides {
  flex: 1;
  min-height: 0;
  display: flex;
  gap: 11px;
  padding: 11px 11px 0;
}

.group {
  flex: 1 1 0;
  min-width: 0;
  margin: 0;
  padding: 0 9px 8px;
  border: 1px solid #7c7c7c;
  border-radius: 4px;
  box-shadow: 0 0 0 1px #fff, inset 0 0 0 1px #fff;
}

.group legend {
  padding: 0 6px 0 2px;
  margin-left: -4px;
}

.sides .group {
  display: flex;
  flex-direction: column;
}

.side-box {
  flex: 1;
  min-height: 0;
  margin-top: 4px;
  padding: 4px 10px 14px;
  display: flex;
  flex-direction: column;
  gap: 4px;
  border: 1px solid #b4b4b4;
  background: #f0f0f0;
}

.side-box .listbox {
  background: #f0f0f0;
}

.tools {
  display: flex;
  gap: 11px;
  margin-top: 5px;
}

.toolset {
  display: flex;
  height: 27px;
  border: 1px solid #a5a5a5;
  border-radius: 3px;
  background: #ebebeb;
}

.toolset button {
  width: 26px;
  display: flex;
  align-items: center;
  justify-content: center;
  background: none;
  border: none;
}

.toolset button + button {
  border-left: 1px solid #8a8a8a;
}

.toolset svg {
  width: 18px;
  height: 18px;
}

.run-row {
  display: grid;
  grid-template-columns: 1fr 1fr;
  gap: 11px;
  padding: 12px 11px 12px 12px;
}

.settings {
  padding-bottom: 15px;
}

.set-grid {
  display: grid;
  grid-template-columns: 25px 125px 51px 75px;
  gap: 10px;
  align-items: center;
  padding: 9px 0 0 7px;
}

.set-grid .soft {
  height: 19px;
  padding-left: 5px;
}

.set-grid label {
  white-space: nowrap;
}

.set-grid input {
  width: 75px;
  height: 19px;
  padding-left: 2px;
  border: 1px solid #c3c3c3;
  background: #f2f2f2;
}

.composite {
  display: flex;
  align-items: center;
  gap: 6px;
  margin: 9px 8px 0;
}

.run-cell {
  padding-top: 31px;
}

.run {
  width: 131px;
  height: 50px;
  border: 1px solid #a5a5a5;
  border-radius: 2px;
  background: #ebebeb;
  color: #a5a5a5;
}

/* find items */
.find-body {
  flex-direction: row;
  gap: 13px;
  padding: 5px 5px 7px 7px;
}

.find-left {
  flex: 293 1 0;
  min-width: 0;
  display: flex;
  flex-direction: column;
}

.find-left label {
  height: 14px;
}

.find-left .combo, .find-left .listbox {
  width: auto;
  margin-left: 6px;
}

.find-left .listbox {
  margin-top: 8px;
}

.btns {
  display: flex;
  gap: 10px;
  margin-top: 15px;
}

.btns.end {
  justify-content: flex-end;
  margin-top: auto;
  padding-right: 4px;
}

.find-right {
  flex: 392 1 0;
  min-width: 0;
  display: flex;
  flex-direction: column;
}

.conditions {
  height: 66px;
  flex: none;
  padding: 2px 1px;
  border: 1px solid #828790;
  background: #fff;
}

.conditions table {
  border-collapse: collapse;
}

.conditions th {
  width: 82px;
  height: 24px;
  padding: 0 0 0 5px;
  text-align: left;
  font-weight: normal;
  border-right: 1px solid #e0e0e0;
}

.checks {
  margin-top: 8px;
}

.checks label {
  display: flex;
  align-items: center;
  gap: 3px;
  height: 16px;
}

.check {
  appearance: none;
  width: 13px;
  height: 13px;
  border: 1px solid #333;
  background: #fff;
}

.check:checked {
  background: #fff url("data:image/svg+xml,%3Csvg xmlns='http://www.w3.org/2000/svg' width='11' height='11'%3E%3Cpath d='M1.500 5.500l3 3 5-6' fill='none' stroke='%23222' stroke-width='1.2'/%3E%3C/svg%3E") center no-repeat;
}

.search-row {
  display: flex;
  margin-top: 3px;
}

.search-row label {
  width: 48px;
}

.search-row .combo {
  width: 229px;
}

/* right column */
.views-body {
  padding: 4px;
}

.views-list {
  flex: 1;
  border: 1px solid #5f5f5f;
  background: #fff;
}

.sets-tools {
  height: 23px;
  display: flex;
  align-items: center;
  gap: 5px;
  padding: 0 4px 0 2px;
}

.sets-tools .gap {
  margin-left: 5px;
}

.sets-list {
  flex: 1;
  margin: 0 1px 1px;
  border: 1px solid #5b9bd5;
  background: #fff;
}

.props-body {
  align-items: center;
  justify-content: center;
  padding-bottom: 8px;
}
```
